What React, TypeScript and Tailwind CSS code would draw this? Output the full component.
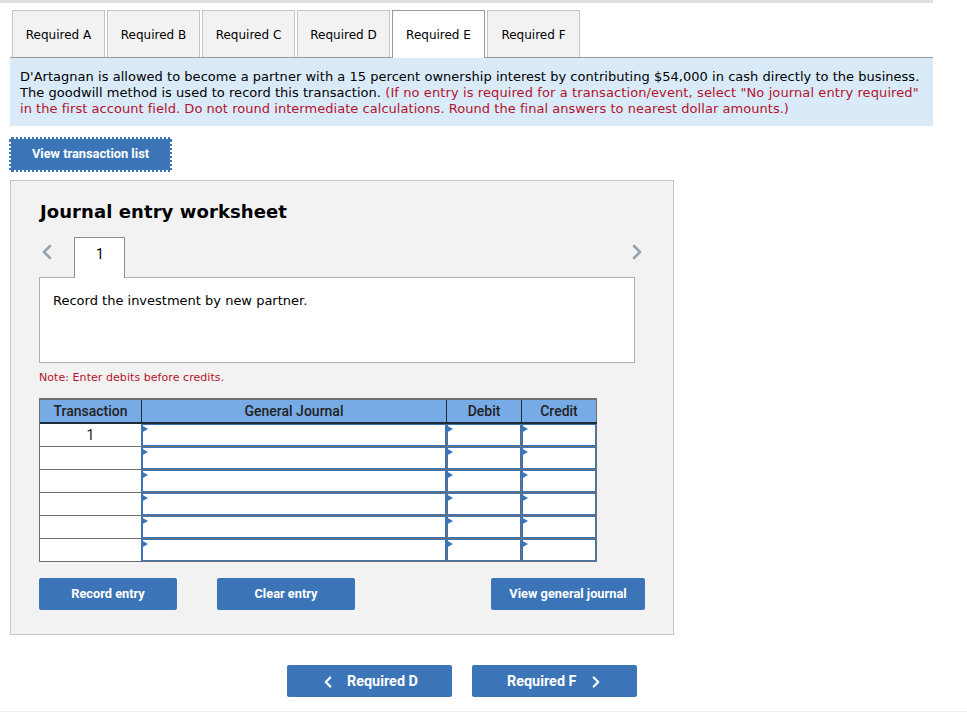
import { ChevronLeft, ChevronRight } from "lucide-react";

const tabs = ["A", "B", "C", "D", "E", "F"];
const rows = [0, 1, 2, 3, 4, 5];

// blue framed input with the little flag in its corner
function InputCell({ width }: { width: string }) {
  return (
    <div className={`${width} h-full border-r border-b border-[#6f6f6f]`}>
      <div className="relative h-full border border-[#3b75b8] bg-white">
        <span className="absolute left-[-2px] top-0 h-0 w-0 border-y-[4px] border-l-[7px] border-y-transparent border-l-[#3b75b8]" />
      </div>
    </div>
  );
}

function BlueButton({ label, className }: { label: string; className: string }) {
  return (
    <button className={`h-8 rounded-[2px] bg-[#3b75b8] font-['Roboto',sans-serif] text-[12.8px] font-bold text-white ${className}`}>
      {label}
    </button>
  );
}

export default function App() {
  return (
    <div className="relative h-[712px] w-[967px] overflow-hidden bg-white font-['DejaVu_Sans','Liberation_Sans',sans-serif] text-[13px] text-black">
      <div className="h-[3px] w-[933px] bg-[#e0e0e0]" />

      {/* Tabs */}
      <div className="mt-[7px] flex gap-[2px] pl-[12px]">
        {tabs.map((t) => (
          <div
            key={t}
            className={
              t === "E"
                ? "relative z-10 mb-[-1px] flex h-[48px] w-[93px] items-center justify-center border border-b-0 border-[#999] bg-white text-[12px]"
                : "flex h-[47px] w-[93px] items-center justify-center border border-b-0 border-[#c4c4c4] bg-[#f2f2f2] pt-px text-[12px]"
            }
          >
            Required {t}
          </div>
        ))}
      </div>

      {/* Question text */}
      <div className="ml-[10px] h-[69px] w-[923px] border-t border-[#999] bg-[#d9ebf9] px-[10px] pt-[11px] text-[13px] leading-[16px] whitespace-nowrap">
        <div className="tracking-[0.03px]">
          D'Artagnan is allowed to become a partner with a 15 percent ownership interest by contributing $54,000 in cash directly to the business.
        </div>
        <div className="tracking-[0.04px]">
          The goodwill method is used to record this transaction.{" "}
          <span className="tracking-[0.1px] text-[#b5122d]">
            (If no entry is required for a transaction/event, select "No journal entry required"
          </span>
        </div>
        <div className="tracking-[0.04px] text-[#b5122d]">
          in the first account field. Do not round intermediate calculations. Round the final answers to nearest dollar amounts.)
        </div>
      </div>

      <button className="ml-[9px] mt-[11px] block h-[35px] w-[163px] border-2 border-dotted border-white bg-[#3b75b8] pb-[2px] font-['Roboto',sans-serif] text-[12.8px] font-bold text-white">
        View transaction list
      </button>

      {/* Worksheet */}
      <div className="ml-[10px] mt-[8px] h-[455px] w-[664px] border border-[#c4c4c4] bg-[#f2f2f2] pl-[28px] pt-[20px]">
        <h2 className="ml-px text-[18px] font-bold leading-[22px] tracking-[0.08px]">Journal entry worksheet</h2>

        <div className="relative mt-[14px] flex h-[41px] w-[596px] items-start">
          <ChevronLeft className="mt-[3px] h-[24px] w-[24px] -translate-x-[4px] text-[#98a2ae]" strokeWidth={2.6} />
          <div className="relative z-10 ml-[11px] flex h-[41px] w-[51px] items-start justify-center border border-b-0 border-[#8f8f8f] bg-white pl-px pt-[6px] font-['Roboto',sans-serif] text-[14px]">
            1
          </div>
          <ChevronRight className="absolute right-[-14px] top-[3px] h-[24px] w-[24px] text-[#98a2ae]" strokeWidth={2.6} />
        </div>

        <div className="mt-[-1px] h-[86px] w-[596px] border border-[#b0b0b0] bg-white pl-[13px] pt-[15px] text-[13px] leading-[16px]">
          Record the investment by new partner.
        </div>

        <p className="mt-[8px] text-[11px] leading-[14px] tracking-[0.06px] text-[#b5122d]">Note: Enter debits before credits.</p>

        {/* Journal table */}
        <div className="mt-[13px] w-[558px] border-t-2 border-l border-[#6f6f6f] font-['Roboto',sans-serif] text-[14px] font-medium text-[#222]">
          <div className="flex h-[24px] border-b-2 border-[#1c2b3a] bg-[#77abe6]">
            <div className="flex w-[102px] items-center justify-center border-r border-[#1c2b3a]">Transaction</div>
            <div className="flex w-[305px] items-center justify-center border-r border-[#1c2b3a]">General Journal</div>
            <div className="flex w-[75px] items-center justify-center border-r border-[#1c2b3a]">Debit</div>
            <div className="flex w-[75px] items-center justify-center border-r border-[#6f6f6f]">Credit</div>
          </div>
          {rows.map((r) => (
            <div key={r} className="flex h-[23px]">
              <div className="flex w-[102px] items-center justify-center border-b border-r border-b-[#6f6f6f] border-r-[#3b75b8] bg-white font-normal">
                {r === 0 ? "1" : ""}
              </div>
              <InputCell width="w-[305px]" />
              <InputCell width="w-[75px]" />
              <InputCell width="w-[75px]" />
            </div>
          ))}
        </div>

        <div className="mt-[16px] flex w-[606px]">
          <BlueButton label="Record entry" className="w-[138px]" />
          <BlueButton label="Clear entry" className="ml-[40px] w-[138px]" />
          <BlueButton label="View general journal" className="ml-[136px] w-[154px]" />
        </div>
      </div>

      {/* Prev / next */}
      <div className="ml-[287px] mt-[30px] flex gap-[20px] font-['Roboto',sans-serif] text-[14.4px] font-bold text-white">
        <button className="flex h-[32px] w-[165px] items-center gap-[10px] rounded-[2px] bg-[#3b75b8] pl-[32px] pt-px">
          <ChevronLeft className="h-[18px] w-[18px]" strokeWidth={3} />
          Required D
        </button>
        <button className="flex h-[32px] w-[165px] items-center gap-[11px] rounded-[2px] bg-[#3b75b8] pl-[35px] pt-px">
          Required F
          <ChevronRight className="h-[18px] w-[18px]" strokeWidth={3} />
        </button>
      </div>

      <div className="absolute bottom-0 left-0 h-px w-full bg-[#efefef]" />
    </div>
  );
}
